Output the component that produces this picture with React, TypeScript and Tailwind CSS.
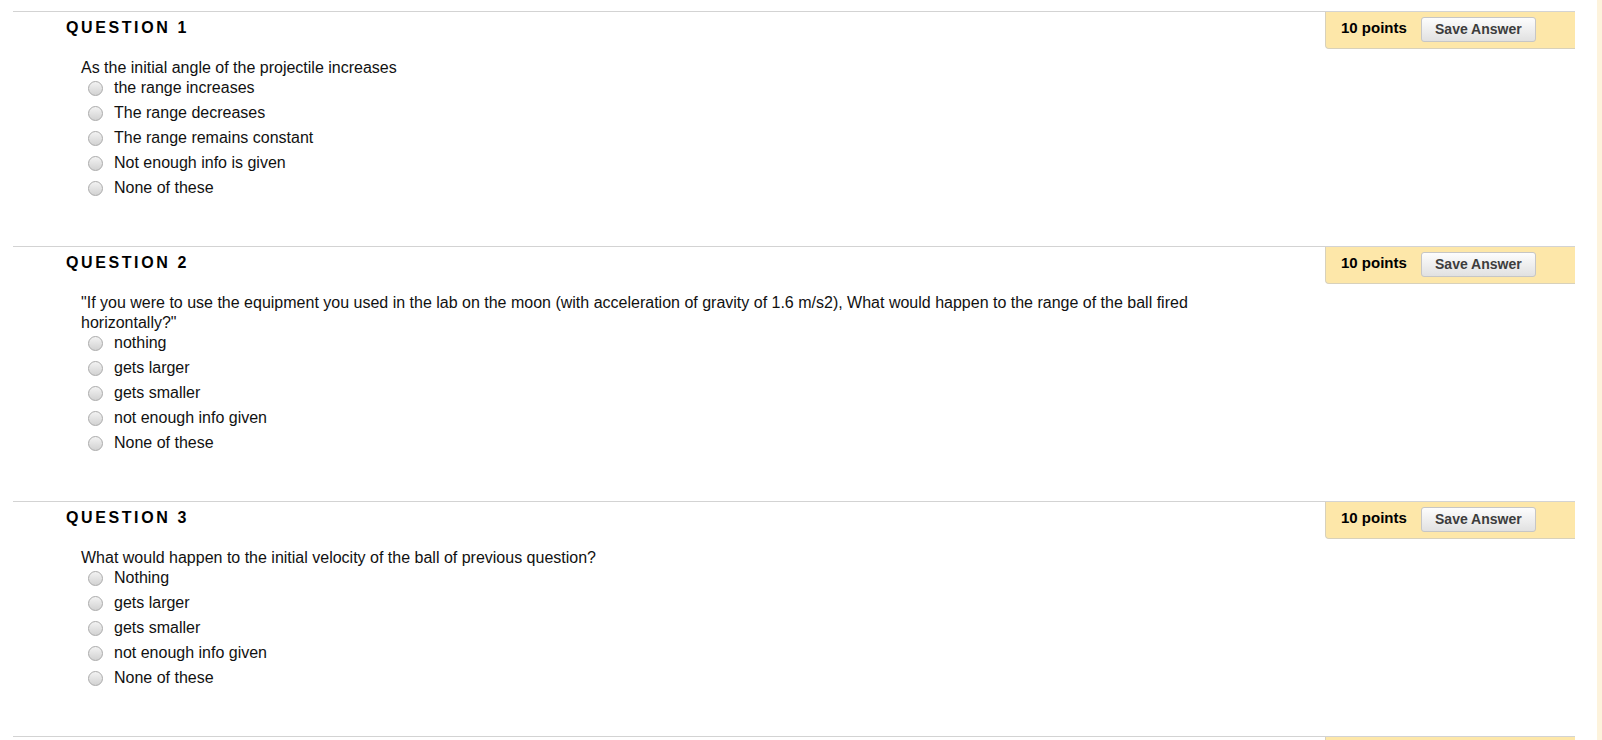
type Question = {
  num: number;
  text: string;
  options: string[];
};

const questions: Question[] = [
  {
    num: 1,
    text: 'As the initial angle of the projectile increases',
    options: [
      'the range increases',
      'The range decreases',
      'The range remains constant',
      'Not enough info is given',
      'None of these',
    ],
  },
  {
    num: 2,
    text: '"If you were to use the equipment you used in the lab on the moon (with acceleration of gravity of 1.6 m/s2), What would happen to the range of the ball fired horizontally?"',
    options: ['nothing', 'gets larger', 'gets smaller', 'not enough info given', 'None of these'],
  },
  {
    num: 3,
    text: 'What would happen to the initial velocity of the ball of previous question?',
    options: ['Nothing', 'gets larger', 'gets smaller', 'not enough info given', 'None of these'],
  },
];

function PointsBox({ empty = false }: { empty?: boolean }) {
  return (
    <div className="w-[250px] shrink-0 h-[37px] bg-[#fde7a9] border-l border-b border-[#d8d1bb] rounded-bl-[4px] flex items-center pl-[15px] pb-[2px]">
      {!empty && (
        <>
          <span className="mb-[3px] text-[15px] font-bold text-black leading-none">10 points</span>
          <button className="ml-[14px] w-[115px] h-[25px] rounded-[3px] border border-[#c6c6c6] bg-gradient-to-b from-[#fdfdfd] to-[#e1e1e1] text-[14px] font-bold text-[#3d3d3d] leading-none">
            Save Answer
          </button>
        </>
      )}
    </div>
  );
}

function Radio() {
  return (
    <span className="ml-[7px] mt-[3px] w-[15px] h-[15px] shrink-0 rounded-full border border-[#aaaaaa] bg-gradient-to-b from-[#f3f3f3] to-[#d2d2d2]" />
  );
}

function QuestionBlock({ q }: { q: Question }) {
  return (
    <section className="flex border-t border-[#d3d3d3]">
      <div className="flex-1 pl-[53px] pr-[60px] pb-[48px]">
        <h3 className="mt-[6px] text-[16px] leading-[20px] font-bold tracking-[2.6px] text-black uppercase">
          Question {q.num}
        </h3>
        <div className="pl-[15px]">
          <p className="mt-[20px] text-[16px] leading-[20px] text-[#111]">{q.text}</p>
          <ul className="flex flex-col gap-[5px]">
            {q.options.map((opt) => (
              <li key={opt} className="flex items-start h-[20px]">
                <Radio />
                <span className="ml-[11px] text-[16px] leading-[20px] text-[#111]">{opt}</span>
              </li>
            ))}
          </ul>
        </div>
      </div>
      <PointsBox />
    </section>
  );
}

export default function App() {
  return (
    <div className="h-[740px] overflow-hidden bg-white flex font-['Liberation_Sans',Arial,sans-serif]">
      <main className="flex-1 pl-[13px] pr-[22px] pt-[11px]">
        {questions.map((q) => (
          <QuestionBlock key={q.num} q={q} />
        ))}
        {/* next question starts just below the fold */}
        <section className="flex border-t border-[#d3d3d3]">
          <div className="flex-1" />
          <PointsBox empty />
        </section>
      </main>
      <div className="w-[5px] shrink-0 bg-[#fdf3dc]" />
    </div>
  );
}
